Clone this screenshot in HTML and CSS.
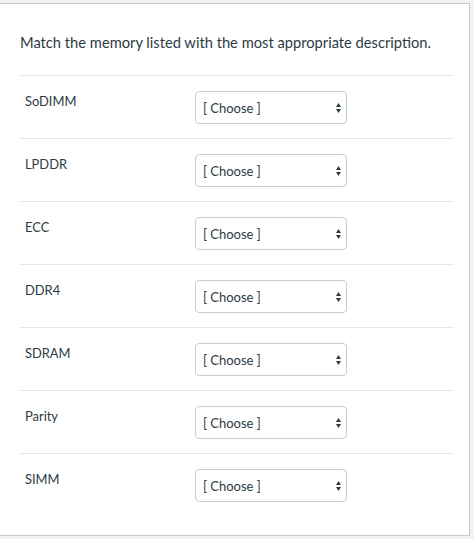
FILE: index.html
```html
<!DOCTYPE html>
<html lang="en">
<head>
  <meta charset="UTF-8" />
  <meta name="viewport" content="width=device-width, initial-scale=1.0" />
  <title>Matching question</title>
  <link rel="stylesheet" href="styles.css">
</head>
<body>
<div class="panel">
  <div class="question">
    <p class="question-text">Match the memory listed with the most appropriate description.</p>

    <div class="answers">
      <div class="answer-row">
        <label class="answer-label" for="a1">SoDIMM</label>
        <div class="select-wrap">
          <select id="a1"><option>[ Choose ]</option></select>
          <svg class="select-arrows" width="5" height="10" viewBox="0 0 5 10"><path d="M2.5 0L5 4H0Z M2.5 10L5 6H0Z"/></svg>
        </div>
      </div>
      <div class="answer-row">
        <label class="answer-label" for="a2">LPDDR</label>
        <div class="select-wrap">
          <select id="a2"><option>[ Choose ]</option></select>
          <svg class="select-arrows" width="5" height="10" viewBox="0 0 5 10"><path d="M2.5 0L5 4H0Z M2.5 10L5 6H0Z"/></svg>
        </div>
      </div>
      <div class="answer-row">
        <label class="answer-label" for="a3">ECC</label>
        <div class="select-wrap">
          <select id="a3"><option>[ Choose ]</option></select>
          <svg class="select-arrows" width="5" height="10" viewBox="0 0 5 10"><path d="M2.5 0L5 4H0Z M2.5 10L5 6H0Z"/></svg>
        </div>
      </div>
      <div class="answer-row">
        <label class="answer-label" for="a4">DDR4</label>
        <div class="select-wrap">
          <select id="a4"><option>[ Choose ]</option></select>
          <svg class="select-arrows" width="5" height="10" viewBox="0 0 5 10"><path d="M2.5 0L5 4H0Z M2.5 10L5 6H0Z"/></svg>
        </div>
      </div>
      <div class="answer-row">
        <label class="answer-label" for="a5">SDRAM</label>
        <div class="select-wrap">
          <select id="a5"><option>[ Choose ]</option></select>
          <svg class="select-arrows" width="5" height="10" viewBox="0 0 5 10"><path d="M2.5 0L5 4H0Z M2.5 10L5 6H0Z"/></svg>
        </div>
      </div>
      <div class="answer-row">
        <label class="answer-label" for="a6">Parity</label>
        <div class="select-wrap">
          <select id="a6"><option>[ Choose ]</option></select>
          <svg class="select-arrows" width="5" height="10" viewBox="0 0 5 10"><path d="M2.5 0L5 4H0Z M2.5 10L5 6H0Z"/></svg>
        </div>
      </div>
      <div class="answer-row">
        <label class="answer-label" for="a7">SIMM</label>
        <div class="select-wrap">
          <select id="a7"><option>[ Choose ]</option></select>
          <svg class="select-arrows" width="5" height="10" viewBox="0 0 5 10"><path d="M2.5 0L5 4H0Z M2.5 10L5 6H0Z"/></svg>
        </div>
      </div>
    </div>
  </div>
</div>
</body>
</html>
```

FILE: styles.css
```css
body {
  margin: 0;
  background: #f2f2f2;
  font-family: Lato, 'Open Sans', sans-serif;
  color: #2d3b45;
}
.panel {
  margin: 3px 0 0 -1px;
  width: 471px;
  height: 533px;
  box-sizing: border-box;
  background: #fff;
  border: 1px solid #c8c8c8;
}
.question {
  padding: 27px 0 0 20px;
  width: 454px;
  box-sizing: border-box;
}
.question-text {
  margin: 0 0 21px;
  font-size: 14.7px;
  line-height: 23px;
  white-space: nowrap;
}
.answer-row {
  display: flex;
  align-items: flex-start;
  border-top: 1px solid #e6e6e6;
  padding: 15px 0 14px;
}
.answer-label {
  width: 170px;
  padding-left: 5px;
  font-size: 12.9px;
  line-height: 20px;
}
.select-wrap {
  position: relative;
  width: 152px;
}
.select-wrap select {
  appearance: none;
  -webkit-appearance: none;
  width: 100%;
  height: 33px;
  margin: 0;
  padding: 0 20px 0 7px;
  box-sizing: border-box;
  background: #fff;
  border: 1px solid #c7cdd1;
  border-radius: 4px;
  font-family: Lato, 'Open Sans', sans-serif;
  font-size: 13px;
  color: #2d3b45;
}
.select-arrows {
  position: absolute;
  right: 6px;
  top: 12px;
  fill: #2d3b45;
  pointer-events: none;
}
```
